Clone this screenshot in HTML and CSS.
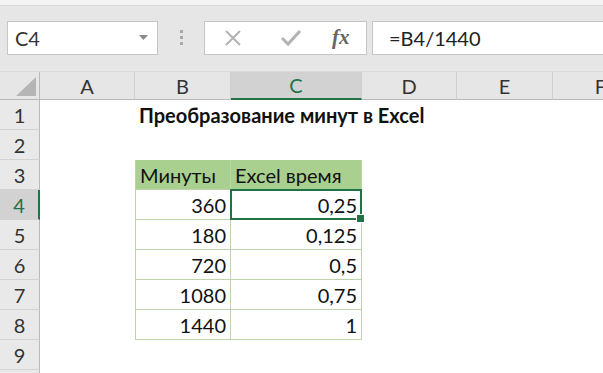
FILE: index.html
```html
<!DOCTYPE html>
<html lang="ru">
<head>
  <meta charset="UTF-8" />
  <title>Преобразование минут в Excel</title>
  <link rel="stylesheet" href="styles.css">
</head>
<body>
  <!-- Ribbon remnant -->
  <div class="top-strip"></div>

  <!-- Formula bar -->
  <div class="toolbar">
    <div class="name-box">
      <span>C4</span>
      <svg class="caret" width="9" height="5" viewBox="0 0 9 5"><path d="M0 0 H9 L4.5 5 Z" fill="#8a8a8a"/></svg>
    </div>
    <div class="grip"><i></i><i></i><i></i></div>
    <div class="fx-buttons">
      <svg width="18" height="18" viewBox="0 0 18 18"><path d="M2 2 L16 16 M16 2 L2 16" stroke="#b3b3b3" stroke-width="2"/></svg>
      <svg width="22" height="18" viewBox="0 0 22 18"><path d="M2 9 L8 15 L20 2" stroke="#b3b3b3" stroke-width="3" fill="none"/></svg>
      <span class="fx">fx</span>
    </div>
    <div class="formula">=B4/1440</div>
  </div>

  <!-- Sheet -->
  <div class="sheet">
    <div class="row head">
      <div class="rh corner"><span class="tri"></span></div>
      <div class="cell ca">A</div>
      <div class="cell cb">B</div>
      <div class="cell cc active-col">C</div>
      <div class="cell cd">D</div>
      <div class="cell ce">E</div>
      <div class="cell cf">F</div>
    </div>

    <div class="row">
      <div class="rh">1</div>
      <div class="cell ca"></div>
      <div class="cell cb title">Преобразование минут в Excel</div>
    </div>
    <div class="row">
      <div class="rh">2</div>
    </div>
    <div class="row">
      <div class="rh">3</div>
      <div class="cell ca"></div>
      <div class="cell cb tb th first">Минуты</div>
      <div class="cell cc tb th first">Excel время</div>
    </div>
    <div class="row">
      <div class="rh active-row">4</div>
      <div class="cell ca"></div>
      <div class="cell cb tb num">360</div>
      <div class="cell cc tb num selected">0,25</div>
    </div>
    <div class="row">
      <div class="rh">5</div>
      <div class="cell ca"></div>
      <div class="cell cb tb num">180</div>
      <div class="cell cc tb num">0,125</div>
    </div>
    <div class="row">
      <div class="rh">6</div>
      <div class="cell ca"></div>
      <div class="cell cb tb num">720</div>
      <div class="cell cc tb num">0,5</div>
    </div>
    <div class="row">
      <div class="rh">7</div>
      <div class="cell ca"></div>
      <div class="cell cb tb num">1080</div>
      <div class="cell cc tb num">0,75</div>
    </div>
    <div class="row">
      <div class="rh">8</div>
      <div class="cell ca"></div>
      <div class="cell cb tb num">1440</div>
      <div class="cell cc tb num">1</div>
    </div>
    <div class="row">
      <div class="rh">9</div>
    </div>
    <div class="row">
      <div class="rh"></div>
    </div>
  </div>
</body>
</html>
```

FILE: styles.css
```css
* {
  margin: 0;
  padding: 0;
  box-sizing: border-box;
}

body {
  background: #ffffff;
  font-family: Lato, 'Liberation Sans', sans-serif;
  color: #111;
  overflow: hidden;
  width: 603px;
  height: 373px;
}

/* Ribbon remnant */
.top-strip {
  height: 6px;
  background: #f3f3f3;
  border-bottom: 1px solid #d6d6d6;
}

/* Formula bar */
.toolbar {
  display: flex;
  align-items: center;
  height: 65px;
  padding: 0 0 2px 7px;
  background: #e6e6e6;
}

.name-box {
  width: 151px;
  height: 34px;
  background: #fff;
  border: 1px solid #c6c6c6;
  display: flex;
  align-items: center;
  justify-content: space-between;
  padding: 0 9px 0 7px;
  font-size: 20px;
  color: #333;
}

.grip {
  width: 46px;
  display: flex;
  flex-direction: column;
  align-items: center;
  gap: 3px;
}

.grip i {
  width: 3px;
  height: 3px;
  background: #a9a9a9;
}

.fx-buttons {
  width: 163px;
  height: 34px;
  background: #fff;
  border: 1px solid #c6c6c6;
  display: flex;
  align-items: center;
  padding-left: 19px;
  gap: 38px;
}

.fx {
  font-family: 'Liberation Serif', serif;
  font-style: italic;
  font-weight: bold;
  font-size: 21px;
  color: #666;
  margin-left: -8px;
}

.formula {
  flex: 1;
  height: 34px;
  margin-left: 5px;
  background: #fff;
  border: 1px solid #c6c6c6;
  border-right: none;
  display: flex;
  align-items: center;
  padding-left: 16px;
  font-size: 20px;
  color: #222;
}

/* Sheet */
.sheet {
  background: #fff;
}

.row {
  display: flex;
  height: 30px;
}

.row.head {
  height: 29px;
  background: #e6e6e6;
  border-top: 1px solid #dadada;
}

.rh {
  width: 40px;
  flex: none;
  background: #e9e9e9;
  border-right: 1px solid #b9b9b9;
  border-bottom: 1px solid #d2d2d2;
  display: flex;
  align-items: center;
  justify-content: center;
  font-size: 20px;
  color: #333;
}

.rh.corner {
  position: relative;
  background: #e6e6e6;
  border-bottom: 1px solid #b9b9b9;
}

.tri {
  position: absolute;
  right: 3px;
  bottom: 3px;
  width: 0;
  height: 0;
  border-left: 20px solid transparent;
  border-bottom: 19px solid #b5b5b5;
}

.rh.active-row {
  background: #d2d2d2;
  color: #217346;
  border-right: 2px solid #217346;
}

.cell {
  flex: none;
  display: flex;
  align-items: flex-end;
  padding: 0 4px 2px;
  font-size: 20px;
  white-space: nowrap;
}

.ca { width: 95px; }
.cb { width: 96px; }
.cc { width: 131px; }
.cd { width: 95px; }
.ce { width: 96px; }
.cf { width: 96px; }

.head .cell {
  align-items: center;
  justify-content: center;
  padding: 0;
  color: #333;
  border-right: 1px solid #cfcfcf;
  border-bottom: 1px solid #b9b9b9;
}

.head .active-col {
  background: #d2d2d2;
  color: #217346;
  border-bottom: 2px solid #217346;
}

.title {
  font-weight: bold;
  font-size: 20px;
  padding-bottom: 3px;
  overflow: visible;
}

/* Table */
.tb {
  border-right: 1px solid #bfd3ac;
  border-bottom: 1px solid #bfd3ac;
}

.tb.cb {
  border-left: 1px solid #bfd3ac;
}

.th {
  background: #a9d08e;
}

.num {
  justify-content: flex-end;
}

.selected {
  position: relative;
}

.selected::before {
  content: "";
  position: absolute;
  left: -1px;
  top: -1px;
  right: -1px;
  bottom: -1px;
  border: 2px solid #217346;
}

.selected::after {
  content: "";
  position: absolute;
  right: -4px;
  bottom: -4px;
  width: 7px;
  height: 7px;
  background: #217346;
  border: 1px solid #fff;
}
```
